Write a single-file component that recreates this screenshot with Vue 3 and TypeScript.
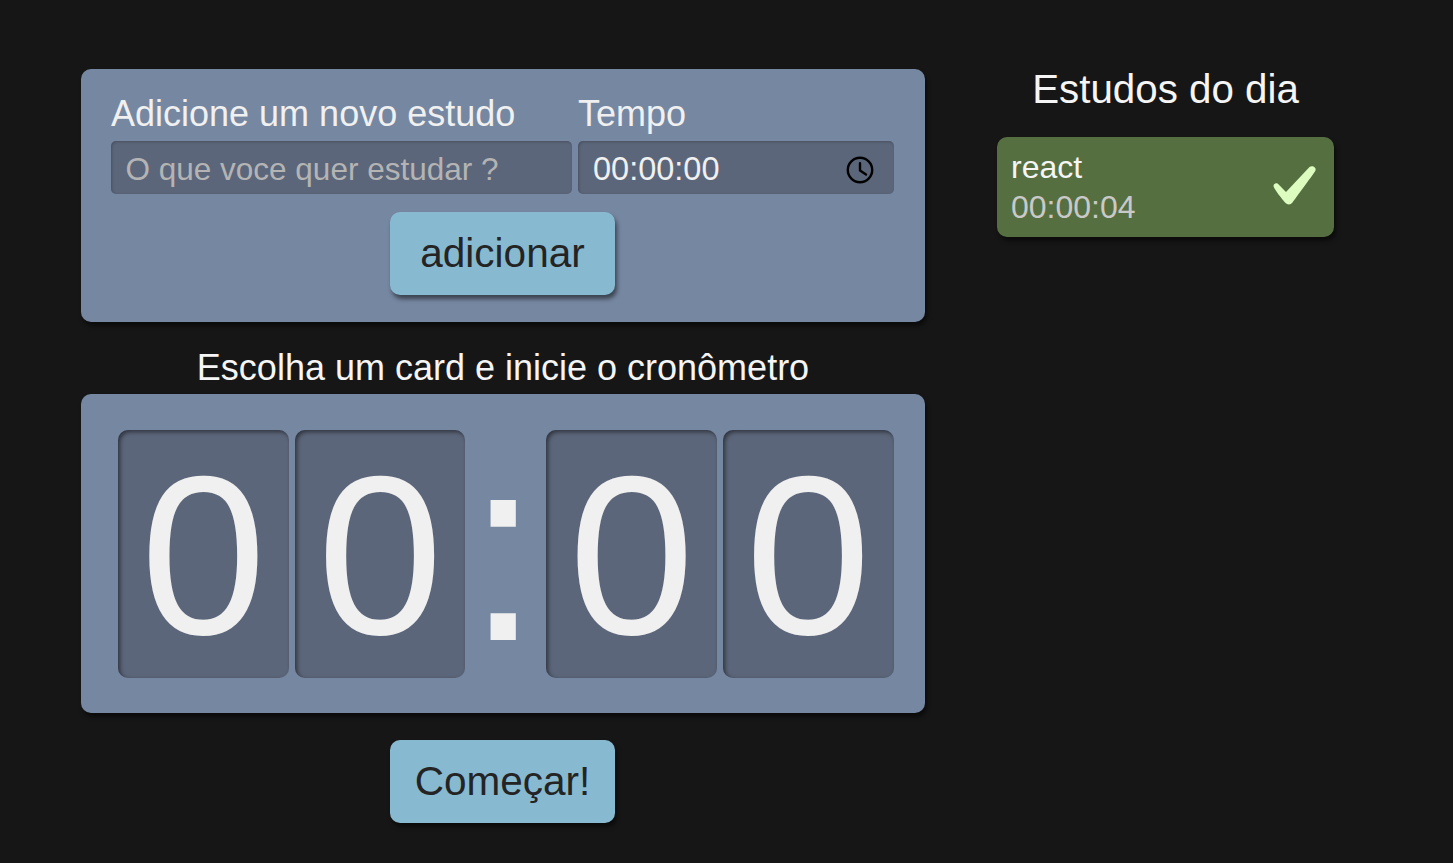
<script setup lang="ts">
const digits: string[] = ['0', '0'];
const seconds: string[] = ['0', '0'];
</script>

<template>
  <main class="page">
    <section class="left">
      <form class="card form" @submit.prevent>
        <div class="fields">
          <div class="field task">
            <label for="task">Adicione um novo estudo</label>
            <input id="task" type="text" placeholder="O que voce quer estudar ?" />
          </div>
          <div class="field time">
            <label for="time">Tempo</label>
            <div class="time-box">
              <input id="time" type="text" value="00:00:00" readonly />
              <svg class="clock" viewBox="0 0 28 28" fill="none" stroke="#000" stroke-width="2.4" stroke-linecap="round" stroke-linejoin="round">
                <circle cx="14" cy="14" r="12.2" />
                <path d="M14 7.200V14.500L20 18.500" />
              </svg>
            </div>
          </div>
        </div>
        <button class="btn raised" type="submit">adicionar</button>
      </form>

      <h2 class="subtitle">Escolha um card e inicie o cronômetro</h2>

      <div class="card timer">
        <span v-for="(d, i) in digits" :key="'m' + i" class="digit">{{ d }}</span>
        <span class="colon">:</span>
        <span v-for="(d, i) in seconds" :key="'s' + i" class="digit">{{ d }}</span>
      </div>

      <button class="btn start" type="button">Começar!</button>
    </section>

    <aside class="right">
      <h1 class="title">Estudos do dia</h1>
      <div class="study">
        <div class="study-text">
          <h3>react</h3>
          <span>00:00:04</span>
        </div>
        <svg class="check" viewBox="0 0 60 52">
          <path fill="#dcfcc0" d="M8.600 28.500C8 26.500 10.500 24.500 12.500 25.500C14 26.500 18.500 31.500 21 34L44.500 9C47 7 51.500 9 50.500 12.500C50 14 30 41 27.500 44.500C25.500 47 22.500 47 20.500 45C17 41 9.500 31.500 8.600 28.500Z" />
        </svg>
      </div>
    </aside>
  </main>
</template>

<style>
html,
body {
  margin: 0;
  background: #161616;
}
</style>

<style scoped>
.page {
  box-sizing: border-box;
  min-height: 863px;
  padding: 69px 0 0 81px;
  display: flex;
  align-items: flex-start;
  font-family: "Liberation Sans", Arial, sans-serif;
  color: #f0f0f0;
}
.left {
  width: 844px;
  display: flex;
  flex-direction: column;
  align-items: center;
}
.card {
  box-sizing: border-box;
  width: 100%;
  background: #7687a1;
  border-radius: 10px;
  box-shadow: 2px 4px 4px rgba(0, 0, 0, 0.5);
}
.form {
  height: 253px;
  padding: 22px 31px 0 30px;
  display: flex;
  flex-direction: column;
  align-items: center;
}
.fields {
  width: 100%;
  display: flex;
  gap: 6px;
}
.field {
  display: flex;
  flex-direction: column;
}
.task {
  width: 461px;
}
.time {
  width: 316px;
}
label {
  font-size: 36px;
  line-height: 46px;
  margin-bottom: 4px;
  color: #f0f0f0;
}
input {
  box-sizing: border-box;
  width: 100%;
  height: 53px;
  padding: 3px 15px 0 14.500px;
  border: 0;
  outline: 0;
  border-radius: 5px;
  background: #5c667a;
  box-shadow: inset 1px 1px 3px rgba(0, 0, 0, 0.22);
  font-family: inherit;
  font-size: 31.500px;
  color: #f0f0f0;
}
#time {
  padding-left: 15px;
  font-size: 32.500px;
}
input::placeholder {
  color: #b4b4b4;
  opacity: 1;
}
.time-box {
  position: relative;
}
.clock {
  position: absolute;
  right: 20px;
  top: 15px;
  width: 28px;
  height: 28px;
}
.btn {
  box-sizing: border-box;
  width: 225px;
  height: 83px;
  border: 0;
  border-radius: 10px;
  background: #87bad1;
  color: #242424;
  font-family: inherit;
  font-size: 40.500px;
  padding: 0;
}
.raised {
  margin-top: 18px;
  box-shadow: 2px 4px 4px rgba(0, 0, 0, 0.5);
}
.subtitle {
  margin: 28px 0 9px;
  font-size: 36px;
  line-height: 35px;
  font-weight: 400;
  text-align: center;
  color: #f5f5f5;
}
.timer {
  height: 319px;
  padding: 36px 31px 0 37px;
  display: flex;
  align-items: flex-start;
  gap: 6px;
}
.digit {
  flex: none;
  box-sizing: border-box;
  width: 170.700px;
  height: 248px;
  border-radius: 10px;
  background: #5c667a;
  box-shadow: inset 2px 2px 4px rgba(0, 0, 0, 0.5);
  font-size: 226px;
  line-height: 251px;
  text-align: center;
}
.colon {
  flex: none;
  box-sizing: border-box;
  width: 68.800px;
  height: 248px;
  font-size: 265px;
  line-height: 237px;
  text-align: left;
  text-indent: -5px;
}
.start {
  margin-top: 27px;
  margin-right: 1px;
  box-shadow: 2px 4px 4px rgba(0, 0, 0, 0.5);
}
.right {
  width: 337px;
  margin-left: 72px;
  display: flex;
  flex-direction: column;
  align-items: stretch;
}
.title {
  margin: 0 0 27px;
  font-size: 40.300px;
  line-height: 41px;
  font-weight: 400;
  text-align: center;
  color: #f5f5f5;
}
.study {
  box-sizing: border-box;
  height: 100px;
  padding: 0 9px 0 14px;
  border-radius: 10px;
  background: #566f41;
  box-shadow: 2px 4px 4px rgba(0, 0, 0, 0.5);
  display: flex;
  align-items: center;
  justify-content: space-between;
}
.study-text {
  display: flex;
  flex-direction: column;
}
.study-text h3 {
  margin: -1px 0 0;
  font-size: 32px;
  line-height: 40px;
  font-weight: 400;
  color: #f5f5f5;
}
.study-text span {
  font-size: 32px;
  line-height: 40px;
  color: #c9c9c9;
}
.check {
  width: 60px;
  height: 52px;
  margin-bottom: 6px;
}
</style>
